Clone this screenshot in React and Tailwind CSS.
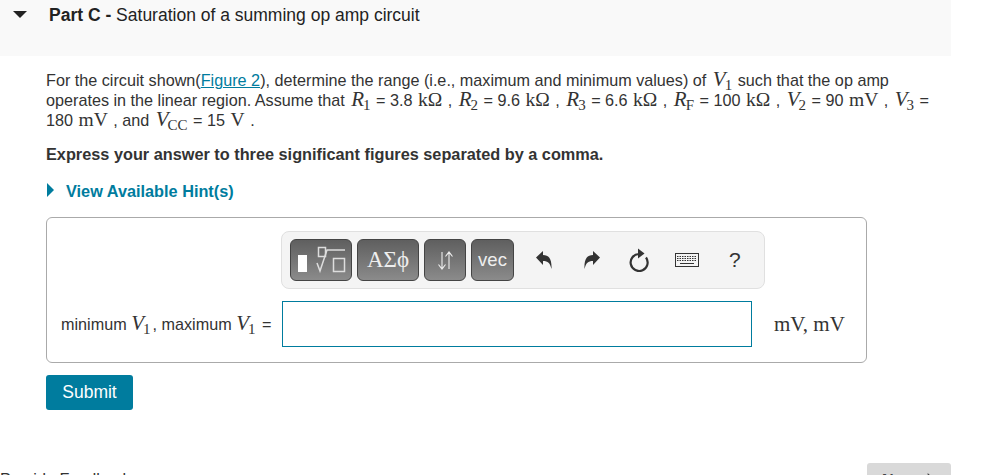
const SERIF = "font-['Liberation_Serif',serif]";

const Var = ({ name, sub, className = "ml-[2px] mr-[1px]" }) => (
  <span className={`${SERIF} text-[21px] leading-[0] italic ${className}`}>
    {name}
    {sub && <span className="ml-[-1px] text-[15px] leading-[0] not-italic align-[-4px]">{sub}</span>}
  </span>
);

const Unit = ({ children }) => <span className={`${SERIF} mx-[1px] text-[19.500px] leading-[0]`}>{children}</span>;

const ToolButton = ({ className, children }) => (
  <div
    className={`h-[42px] flex items-center justify-center rounded-[6px] border border-[#444] bg-gradient-to-b from-[#5f5f5f] to-[#8b8b8b] text-[#eee] ${className}`}
  >
    {children}
  </div>
);

const TemplatesIcon = () => (
  <svg width="54" height="34" viewBox="0 0 54 34" fill="none">
    <rect x="4" y="12" width="9" height="17" fill="#fff" />
    <rect x="24.500" y="4.500" width="7" height="9" stroke="#ddd" strokeWidth="1.500" />
    <path d="M23 20l3 8 7-21h18" stroke="#ddd" strokeWidth="1.500" />
    <rect x="39.500" y="15.500" width="11" height="13" stroke="#ddd" strokeWidth="1.500" />
  </svg>
);

const ArrowsIcon = () => (
  <svg width="17" height="19" viewBox="0 0 17 19" fill="none" stroke="#eee" strokeWidth="1.100">
    <path d="M5 1v17M1.500 13.500L5 18l3.500-4.500" />
    <path d="M12 18V1M8.500 5.500L12 1l3.500 4.500" />
  </svg>
);

const UndoIcon = ({ flip }) => (
  <svg width="18" height="20" viewBox="0 0 18 20" className={flip ? "-scale-x-100" : ""}>
    <path d="M1 7.500L8 1v4c6 0 9 4 8.500 14C15 13 13 11 8 11v4z" fill="#333" />
  </svg>
);

const ResetIcon = () => (
  <svg width="22" height="24" viewBox="0 0 22 24" fill="none">
    <path d="M11 6a8.500 8.500 0 1 0 7 3.500" stroke="#333" strokeWidth="2.200" />
    <path d="M10 0.500l6.500 5L10 10.500z" fill="#333" />
  </svg>
);

const KeyboardIcon = () => (
  <svg width="24" height="14" viewBox="0 0 24 14" fill="none">
    <rect x="0.500" y="0.500" width="23" height="13" fill="#f4f4f4" stroke="#333" />
    <path d="M2 3.500h20M2 5.500h20M2 7.500h20" stroke="#333" strokeDasharray="1.500 1" />
    <path d="M5 10.500h14" stroke="#333" />
  </svg>
);

export default function App() {
  return (
    <div className="h-[475px] w-[1006px] overflow-hidden bg-white font-['Liberation_Sans',Arial,sans-serif] text-[#333]">
      <div className="w-[951px]">
        <header className="h-[56px] bg-[#f9f9f9] flex items-start pt-[5px]">
          <svg width="14" height="7" viewBox="0 0 14 7" className="ml-[13px] mt-[6px]">
            <path d="M0 0h14L7 7z" fill="#222" />
          </svg>
          <h2 className="ml-[22px] text-[17.500px] leading-[20px] font-normal text-[#222]">
            <b>Part C - </b>Saturation of a summing op amp circuit
          </h2>
        </header>

        <main className="px-[46px] pt-[14px]">
          <div className="text-[16.200px] leading-[20px] whitespace-nowrap">
            <p>
              For the circuit shown(<a className="text-[#007c9e] underline">Figure 2</a>), determine the range (i.e., maximum and minimum values) of <Var name="V" sub="1" /> such that the op amp
            </p>
            <p>
              operates in the linear region. Assume that <Var name="R" sub="1" /> = 3.8 <Unit>kΩ</Unit> , <Var name="R" sub="2" /> = 9.6 <Unit>kΩ</Unit> , <Var name="R" sub="3" /> = 6.6 <Unit>kΩ</Unit> , <Var name="R" sub="F" /> = 100 <Unit>kΩ</Unit> , <Var name="V" sub="2" /> = 90 <Unit>mV</Unit> , <Var name="V" sub="3" /> =
            </p>
            <p>
              180 <Unit>mV</Unit> , and <Var name="V" sub="CC" /> = 15 <Unit>V</Unit> .
            </p>
          </div>

          <p className="mt-[14px] text-[16.300px] leading-[20px] font-bold">
            Express your answer to three significant figures separated by a comma.
          </p>

          <a className="mt-[17px] flex items-center text-[#007c9e] text-[16.300px] leading-[20px] font-bold">
            <svg width="7" height="14" viewBox="0 0 7 14" className="mb-[3px] ml-[1px]">
              <path d="M0 0l7 7-7 7z" fill="#007c9e" />
            </svg>
            <span className="ml-[12px]">View Available Hint(s)</span>
          </a>

          <section className="mt-[16px] h-[146px] w-[821px] rounded-[6px] border border-[#aaa] flex flex-col">
            <div className="mt-[13px] ml-[234px] h-[58px] w-[484px] rounded-[8px] border border-[#e0e0e0] bg-[#f4f4f4] flex items-center pl-[8px]">
              <ToolButton className="w-[62px]">
                <TemplatesIcon />
              </ToolButton>
              <ToolButton className={`ml-[5px] w-[62px] ${SERIF} text-[23px]`}>ΑΣϕ</ToolButton>
              <ToolButton className="ml-[5px] w-[42px]">
                <ArrowsIcon />
              </ToolButton>
              <ToolButton className="ml-[5px] w-[43px] text-[18.500px]">vec</ToolButton>
              <div className="ml-[21px] flex items-center">
                <UndoIcon />
                <div className="ml-[30px]">
                  <UndoIcon flip />
                </div>
                <div className="ml-[27px]">
                  <ResetIcon />
                </div>
                <div className="ml-[25px]">
                  <KeyboardIcon />
                </div>
                <span className="ml-[30px] text-[21px] text-[#333]">?</span>
              </div>
            </div>

            <div className="mt-[12px] flex items-center">
              <div className="ml-[14px] w-[221px] text-[16.200px] whitespace-nowrap">
                minimum <Var name="V" sub="1" className="" /><span className="ml-[2px]">,</span> maximum <Var name="V" sub="1" className="" /> <span className="ml-[2px]">=</span>
              </div>
              <div className="h-[46px] w-[470px] border border-[#007c9e] bg-white" />
              <div className={`ml-[22px] mt-[2px] text-[21px] whitespace-nowrap ${SERIF}`}>mV, mV</div>
            </div>
          </section>

          <button className="mt-[12px] block h-[35px] w-[87px] rounded-[3px] bg-[#007c9e] text-white text-[17.500px]">
            Submit
          </button>
        </main>

        <footer className="mt-[53px] flex justify-between items-start">
          <span className="mt-[6px] text-[#333] text-[16.200px] leading-[20px]">Provide Feedback</span>
          <div className="h-[34px] w-[84px] rounded-[3px] bg-[#d9d9d9] text-[#444] text-[16.200px] leading-[20px] font-bold flex justify-center items-start gap-[4px] pt-[7px] pr-[3px]">
            Next
            <svg width="12" height="14" viewBox="0 0 18 20" className="-scale-x-100 mt-[2px]">
              <path d="M1 7.500L8 1v4c6 0 9 4 8.500 14C15 13 13 11 8 11v4z" fill="#444" />
            </svg>
          </div>
        </footer>
      </div>
    </div>
  );
}
